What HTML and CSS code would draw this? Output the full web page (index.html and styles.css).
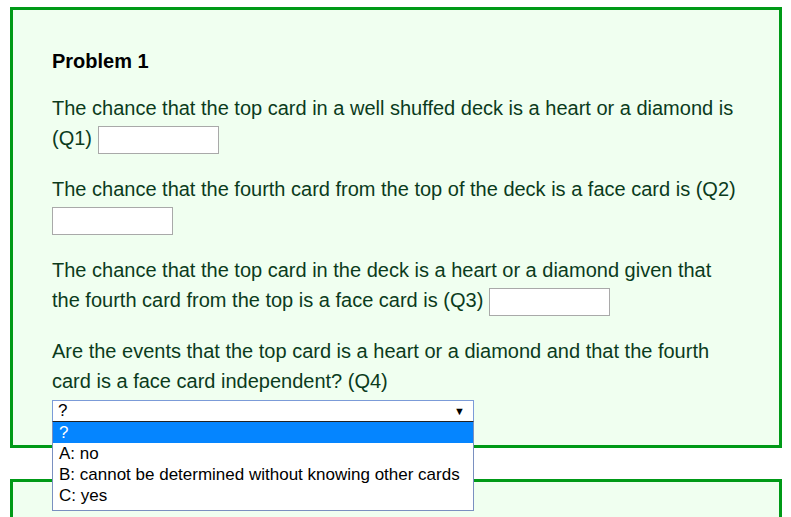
FILE: index.html
```html
<!DOCTYPE html>
<html>
<head>
<meta charset="utf-8">
<link rel="stylesheet" href="styles.css">
</head>
<body>
<div class="page">
  <section class="problem">
    <h3 class="title">Problem 1</h3>
    <p class="q">The chance that the top card in a well shuffed deck is a heart or a diamond is (Q1) <input class="ans" type="text"></p>
    <p class="q">The chance that the fourth card from the top of the deck is a face card is (Q2) <input class="ans" type="text"></p>
    <p class="q">The chance that the top card in the deck is a heart or a diamond given that the fourth card from the top is a face card is (Q3) <input class="ans" type="text"></p>
    <p class="q last">Are the events that the top card is a heart or a diamond and that the fourth card is a face card independent? (Q4)</p>
    <div class="select-wrap">
      <div class="select"><span class="sel-val">?</span><span class="arrow">▼</span></div>
      <ul class="dropdown">
        <li class="opt active">?</li>
        <li class="opt">A: no</li>
        <li class="opt">B: cannot be determined without knowing other cards</li>
        <li class="opt">C: yes</li>
      </ul>
    </div>
  </section>
  <section class="problem next"></section>
</div>
</body>
</html>
```
FILE: styles.css
```css
html, body {
  margin: 0;
  padding: 0;
  background: #ffffff;
  overflow: hidden;
}
body {
  font-family: Arial, "Liberation Sans", sans-serif;
}
.page {
  padding: 7px 9px 0 10px;
  display: flex;
  flex-direction: column;
  gap: 31px;
}
.problem {
  border: 3px solid #009a17;
  background: #f0fff0;
  padding: 36px 39px 23px 39px;
}
.problem.next {
  height: 60px;
  padding: 0;
}
.title {
  margin: 0 0 17px 0;
  font-size: 20px;
  line-height: 30px;
  font-weight: bold;
  color: #000000;
}
.q {
  margin: 0 0 21px 0;
  font-size: 20px;
  line-height: 30px;
  color: #0b3b1c;
}
.q.last {
  margin-bottom: 4px;
}
.ans {
  box-sizing: border-box;
  width: 121px;
  height: 28px;
  border: 1px solid #a9a9a9;
  background: #fff;
  vertical-align: middle;
  margin: -2px 0 -2px 0;
  padding: 0;
}
.select-wrap {
  position: relative;
  width: 422px;
}
.select {
  box-sizing: border-box;
  height: 22px;
  border: 1px solid #7b9bd8;
  border-bottom-color: #222;
  background: #fff;
  display: flex;
  align-items: center;
  justify-content: space-between;
  padding: 0 8px 0 5px;
  font-size: 17px;
  color: #000;
}
.arrow {
  font-size: 11px;
  color: #000;
}
.dropdown {
  position: absolute;
  left: 0;
  top: 22px;
  width: 422px;
  box-sizing: border-box;
  margin: 0;
  padding: 0 0 4px 0;
  list-style: none;
  background: #fff;
  border: 1px solid #7a90c0;
  border-top: none;
}
.opt {
  font-size: 17px;
  line-height: 21px;
  padding-left: 6px;
  color: #000;
}
.opt.active {
  background: #0585ff;
  color: #fff;
}
```
